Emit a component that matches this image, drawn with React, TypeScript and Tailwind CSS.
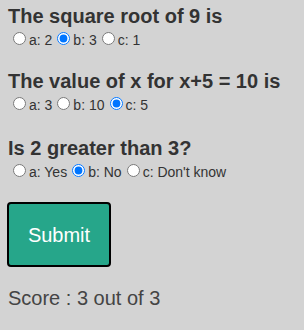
import React, { useState } from "react";

const questions = [
  { q: "The square root of 9 is", opts: ["a: 2", "b: 3", "c: 1"], sel: 1, mt: "" },
  { q: "The value of x for x+5 = 10 is", opts: ["a: 3", "b: 10", "c: 5"], sel: 2, mt: "mt-[22px]" },
  { q: "Is 2 greater than 3?", opts: ["a: Yes", "b: No", "c: Don't know"], sel: 1, mt: "mt-[24px]" },
];

export default function App() {
  const [sel, setSel] = useState(questions.map((q) => q.sel));
  return (
    <div
      className="min-h-[330px] w-full bg-[#d3d3d3] px-2 pt-[5px] text-[#333]"
      style={{ fontFamily: '"Liberation Sans", Arial, sans-serif' }}
    >
      {questions.map((q, i) => (
        <div key={i} className={q.mt}>
          <div className="text-[20px] font-bold leading-[23px]">{q.q}</div>
          <div className="mt-px text-[14px] leading-[16px]">
            {q.opts.map((o, j) => (
              <label key={j}>
                <input
                  type="radio"
                  name={"q" + i}
                  checked={sel[i] === j}
                  onChange={() => setSel((s) => s.map((v, k) => (k === i ? j : v)))}
                  className="ml-[5px] mr-[3px] mt-[3px]"
                />
                {o}
              </label>
            ))}
          </div>
        </div>
      ))}
      <button className="mt-[22px] ml-[-1px] block h-[65px] w-[104px] rounded-[4px] border-2 border-black bg-[#26a68a] text-[20px] text-white">
        Submit
      </button>
      <div className="mt-[20px] text-[20px] leading-[23px] text-[#444]">Score : 3 out of 3</div>
    </div>
  );
}
